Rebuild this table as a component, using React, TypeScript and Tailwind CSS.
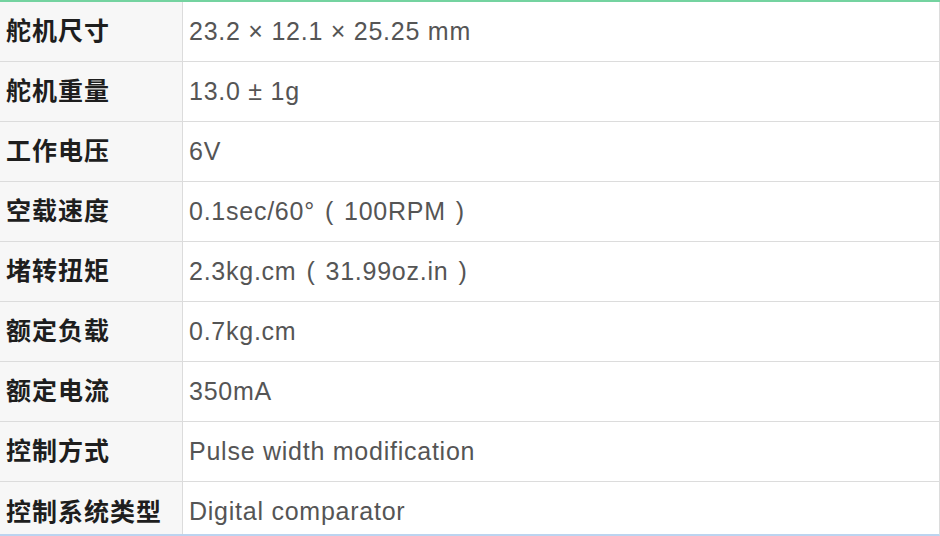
import { Fragment } from 'react'

const rows: [string, string][] = [
  ['舵机尺寸', '23.2 × 12.1 × 25.25 mm'],
  ['舵机重量', '13.0 ± 1g'],
  ['工作电压', '6V'],
  ['空载速度', '0.1sec/60°（100RPM）'],
  ['堵转扭矩', '2.3kg.cm（31.99oz.in）'],
  ['额定负载', '0.7kg.cm'],
  ['额定电流', '350mA'],
  ['控制方式', 'Pulse width modification'],
  ['控制系统类型', 'Digital comparator'],
]

// full-width brackets in the original font sit centred in their box
function Value({ text }: { text: string }) {
  const parts = text.split(/([（）])/)
  return (
    <>
      {parts.map((p, i) =>
        p === '（' ? (
          <span key={i} className="mx-[10px]">(</span>
        ) : p === '）' ? (
          <span key={i} className="mx-[10px]">)</span>
        ) : (
          <Fragment key={i}>{p}</Fragment>
        )
      )}
    </>
  )
}

export default function App() {
  return (
    <div className="w-[940px] h-[536px] overflow-hidden bg-white">
      <div className="h-[2px] bg-[#74d3a0]" />
      <div className="border-r border-[#dcdcdc] border-b-2 border-b-[#bcd4f0]">
        {rows.map(([k, v], i) => {
          const last = i === rows.length - 1
          return (
            <div
              key={k}
              className={`flex ${last ? 'h-[52px]' : 'h-[60px] border-b border-[#dcdcdc]'}`}
            >
              <div
                className={`w-[183px] shrink-0 bg-[#f7f7f7] border-r border-[#dcdcdc] flex items-center pl-[6px] text-[25px] font-bold text-[#1e1e1e] tracking-[1px] ${last ? 'pt-[5px]' : 'pb-[3px]'}`}
                style={{ fontFamily: '"Noto Sans CJK SC", sans-serif' }}
              >
                {k}
              </div>
              <div
                className={`flex-1 flex items-center pl-[6px] text-[25px] text-[#555] tracking-[0.75px] whitespace-pre ${last ? 'pt-[7px]' : ''}`}
                style={{ fontFamily: '"Liberation Sans", "Noto Sans CJK SC", sans-serif' }}
              >
                <Value text={v} />
              </div>
            </div>
          )
        })}
      </div>
    </div>
  )
}
